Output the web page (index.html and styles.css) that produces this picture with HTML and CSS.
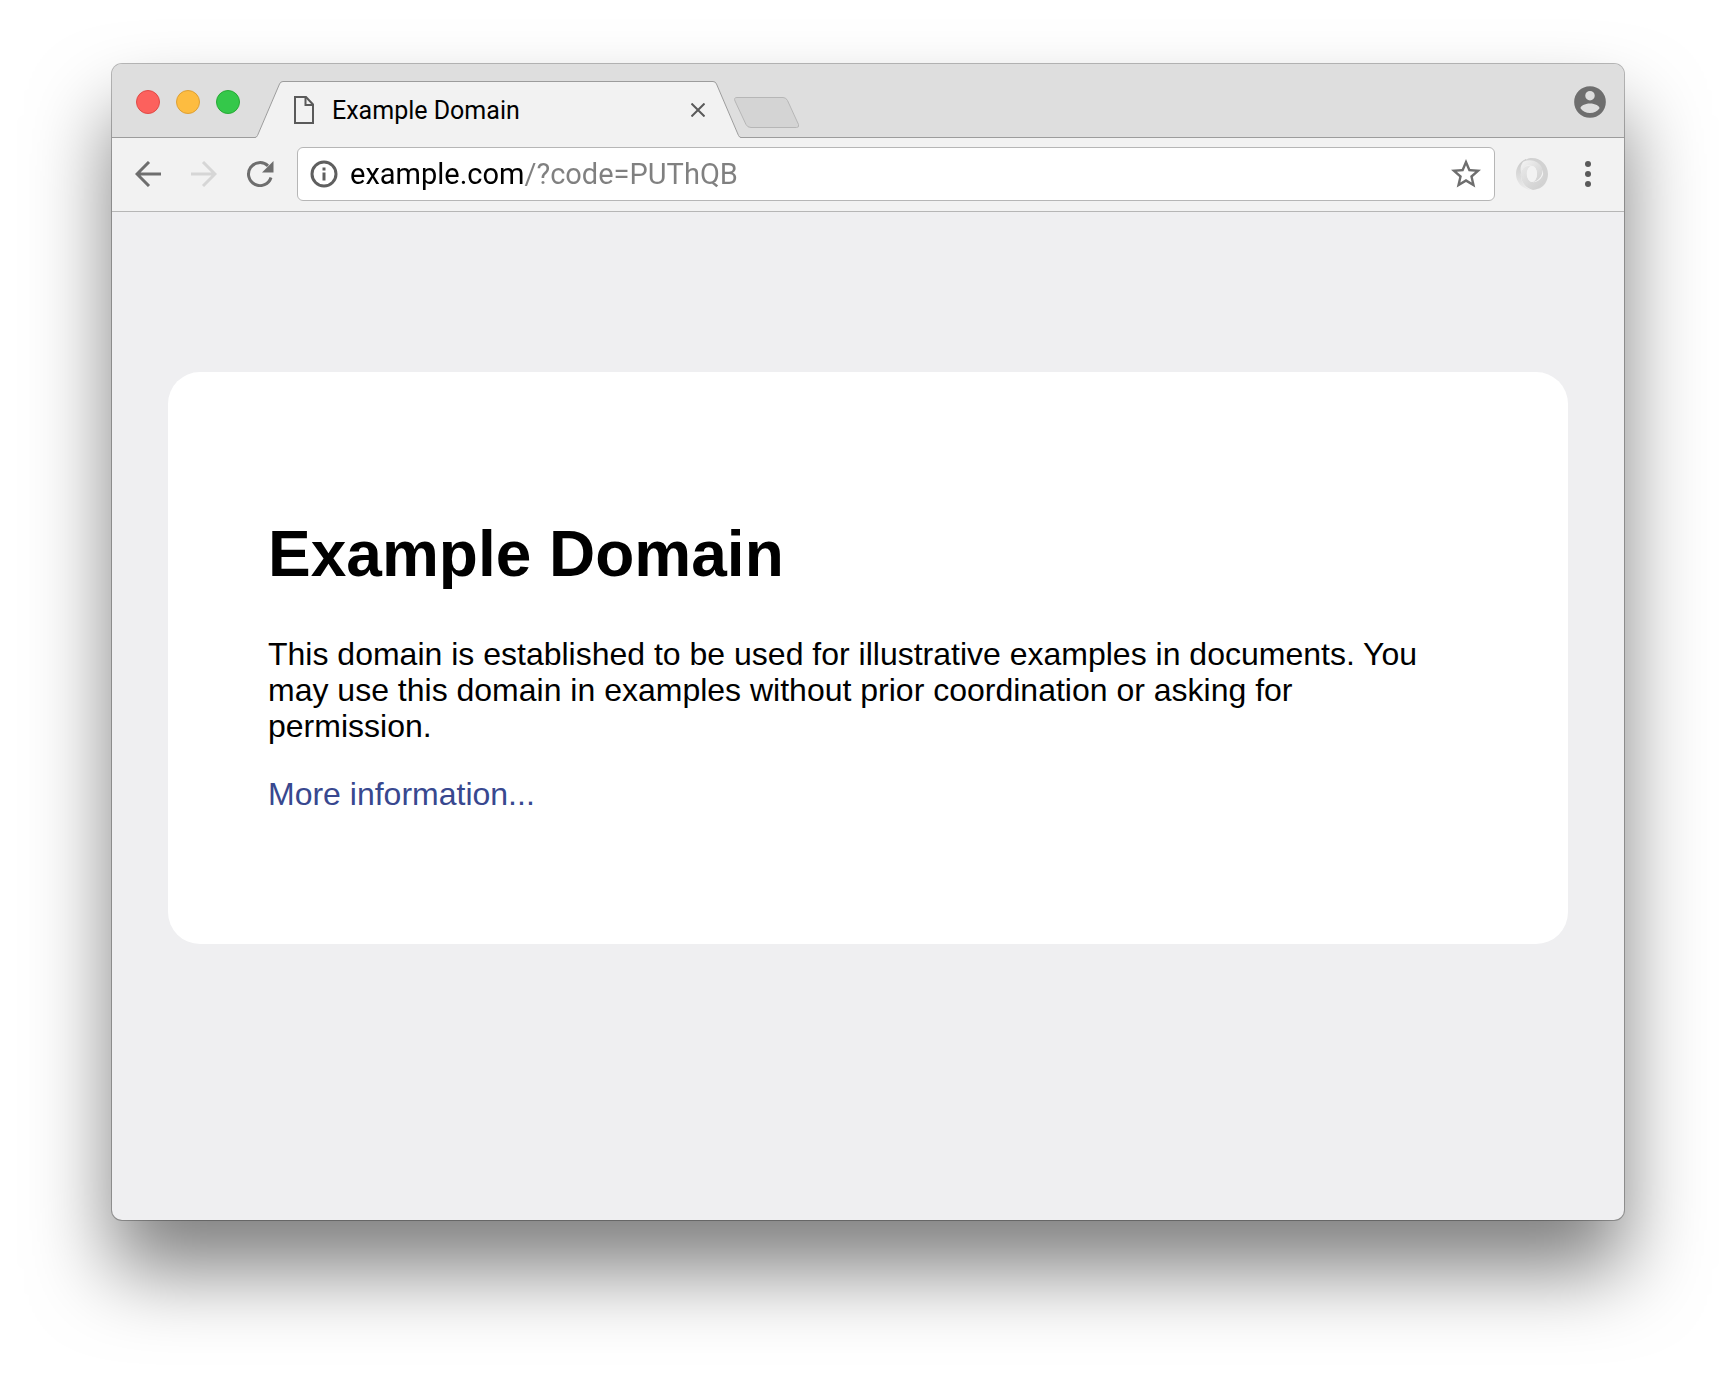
FILE: index.html
```html
<!DOCTYPE html>
<html lang="en">
<head>
  <meta charset="UTF-8">
  <meta name="viewport" content="width=device-width, initial-scale=1.0">
  <title>Example Domain</title>
  <link rel="stylesheet" href="styles.css">
</head>
<body>
<div class="window">
  <header class="tab-strip">
    <div class="lights">
      <button class="light light-close" aria-label="Close window"></button>
      <button class="light light-minimize" aria-label="Minimize window"></button>
      <button class="light light-zoom" aria-label="Zoom window"></button>
    </div>
    <div class="tab">
      <svg class="tab-edge" width="28" height="57" viewBox="0 0 28 57">
        <path class="tab-fill" d="M0 57L2 55L24.5 3Q25.500 .5 28 .5V57Z"/>
        <path class="tab-line" d="M0 56.500Q1.500 56.500 2.500 54.500L24.500 3Q25.500 .5 28 .5"/>
      </svg>
      <div class="tab-body">
        <svg width="20" height="28" viewBox="0 0 20 28" fill="none" stroke="#5a5a5a" stroke-width="2">
          <path d="M1 1H12L19 8.500V27H1Z"/>
          <path d="M11.500 1V9H19"/>
        </svg>
        <span class="tab-title">Example Domain</span>
        <button class="tab-close" aria-label="Close tab">
          <svg width="14" height="14" viewBox="0 0 14 14" fill="none" stroke="#5a5a5a" stroke-width="2">
            <path d="M.5 .5L13.500 13.500M13.500 .5L.5 13.500"/>
          </svg>
        </button>
      </div>
      <svg class="tab-edge" width="28" height="57" viewBox="0 0 28 57">
        <path class="tab-fill" d="M28 57L26 55L3.500 3Q2.500 .5 0 .5V57Z"/>
        <path class="tab-line" d="M28 56.500Q26.500 56.500 25.500 54.500L3.500 3Q2.500 .5 0 .5"/>
      </svg>
    </div>
    <button class="new-tab" aria-label="New tab">
      <svg width="66" height="32" viewBox="0 0 66 32">
        <path d="M3 .5H49Q52 .5 53.500 3.500L64.500 27.500Q65.500 30.500 62.500 30.500H17Q13.500 30.500 12 27.500L1 4Q-.5 .5 3 .5Z" fill="#d4d4d4" stroke="#b6b6b6"/>
      </svg>
    </button>
    <button class="profile" aria-label="Profile">
      <svg width="38" height="38" viewBox="0 0 24 24" fill="#6e6e6e">
        <path fill-rule="evenodd" d="M12 2a10 10 0 1 0 0 20a10 10 0 1 0 0-20zM12 5a3 3 0 1 1 0 6a3 3 0 1 1 0-6zM12 12.900c3.300 0 6 1.500 6 3c-1.200 1.900-3.500 3.100-6 3.100s-4.800-1.200-6-3.100c0-1.500 2.700-3 6-3z"/>
      </svg>
    </button>
  </header>

  <nav class="toolbar">
    <button class="tool" aria-label="Back">
      <svg width="26" height="26" viewBox="0 0 26 26" fill="none" stroke="#6e6e6e" stroke-width="3">
        <path d="M26 13H3M14 1L2 13L14 25"/>
      </svg>
    </button>
    <button class="tool" aria-label="Forward">
      <svg width="26" height="26" viewBox="0 0 26 26" fill="none" stroke="#d6d6d6" stroke-width="3">
        <path d="M0 13H23M12 1L24 13L12 25"/>
      </svg>
    </button>
    <button class="tool" aria-label="Reload">
      <svg width="28" height="26" viewBox="0 0 28 26">
        <path d="M25 16.500A11.500 11.500 0 1 1 22 4.800" fill="none" stroke="#6e6e6e" stroke-width="3"/>
        <path d="M27.500 0V11.500H16Z" fill="#6e6e6e"/>
      </svg>
    </button>
    <div class="address">
      <svg width="28" height="28" viewBox="0 0 28 28" fill="#5f5f5f">
        <circle cx="14" cy="14" r="12" fill="none" stroke="#5f5f5f" stroke-width="3"/>
        <path d="M12.500 7.500h3v3h-3zM12.500 12.500h3v8h-3z"/>
      </svg>
      <input class="url" type="text" aria-label="Address" value="example.com/?code=PUThQB">
      <button class="star" aria-label="Bookmark this page">
        <svg width="36" height="36" viewBox="0 0 24 24" fill="#6e6e6e">
          <path d="M22 9.240l-7.190-.62L12 2 9.190 8.630 2 9.240l5.460 4.730L5.820 21 12 17.270 18.180 21l-1.630-7.030L22 9.240zM12 15.400l-3.760 2.270 1-4.280-3.320-2.880 4.380-.38L12 6.100l1.710 4.040 4.380.38-3.320 2.880 1 4.280L12 15.400z"/>
        </svg>
      </button>
    </div>
    <button class="tool" aria-label="Extension">
      <svg width="32" height="32" viewBox="0 0 32 32">
        <defs>
          <linearGradient id="swirl-outer" x1="0" y1="0" x2="0" y2="1">
            <stop offset="0" stop-color="#c8c8c8"/>
            <stop offset="1" stop-color="#ececec"/>
          </linearGradient>
          <linearGradient id="swirl-top" x1="0" y1="0" x2="1" y2="1">
            <stop offset="0" stop-color="#f4f4f4"/>
            <stop offset="1" stop-color="#cecece"/>
          </linearGradient>
          <linearGradient id="swirl-bottom" x1="0" y1="0" x2="1" y2="1">
            <stop offset="0" stop-color="#e8e8e8"/>
            <stop offset="1" stop-color="#cccccc"/>
          </linearGradient>
        </defs>
        <path d="M10 1C3 4 0 10 0 16C0 24 6 31 15 32C8 29 4 22 5 15C5 11 7 8 11 6Z" fill="url(#swirl-outer)"/>
        <path d="M5 15C4 23 9 30 17 32C26 31 31 23 28 13C27 20 22 25 16 24C12 23 10 18 11 13C12 10 14 8 16 8C10 7 6 10 5 15Z" fill="url(#swirl-bottom)"/>
        <path d="M5 6C9 1 13 0 16 0C25 0 32 7 32 16C32 23 28 29 22 31C27 26 28 20 27 14C25 6 13 1 5 6Z" fill="#d2d2d2"/>
        <path d="M7 4C14 0 23 3 26 10C28 16 23 24 16 24C19 23 21 20 21 16C21 12 19 8 16 8C11 6 7 9 5 14C4 10 5 7 7 4Z" fill="url(#swirl-top)"/>
        <ellipse cx="16" cy="16" rx="5" ry="8" fill="#f2f2f2"/>
      </svg>
    </button>
    <button class="tool" aria-label="Menu">
      <svg width="6" height="26" viewBox="0 0 6 26" fill="#5a5a5a">
        <circle cx="3" cy="3" r="3"/>
        <circle cx="3" cy="13" r="3"/>
        <circle cx="3" cy="23" r="3"/>
      </svg>
    </button>
  </nav>

  <main class="page">
    <div class="card">
      <h1>Example Domain</h1>
      <p>This domain is established to be used for illustrative examples in documents. You may use this domain in examples without prior coordination or asking for permission.</p>
      <p><a href="#">More information...</a></p>
    </div>
  </main>
</div>
</body>
</html>
```
FILE: styles.css
```css
* {
  box-sizing: border-box;
}
body {
  margin: 0;
  min-height: 100vh;
  padding: 64px 112px 160px;
  display: flex;
  background-color: #fff;
  font-family: Roboto, sans-serif;
}
button {
  padding: 0;
  border: 0;
  background: none;
  display: flex;
  align-items: center;
  justify-content: center;
}
svg {
  display: block;
  flex-shrink: 0;
}
.window {
  flex: 1;
  min-width: 0;
  display: flex;
  flex-direction: column;
  border-radius: 10px;
  overflow: hidden;
  background-color: #efeff1;
  box-shadow: 0 0 0 1px rgba(0,0,0,0.27), 0 50px 80px rgba(0,0,0,0.5);
}

/* tabs */
.tab-strip {
  display: flex;
  align-items: flex-end;
  height: 74px;
  background-color: #dedede;
  box-shadow: inset 0 -1px 0 #9c9c9c;
}
.lights {
  display: flex;
  gap: 16px;
  padding: 0 15px 24px 24px;
}
.light {
  width: 24px;
  height: 24px;
  border-radius: 50%;
  border: 1px solid;
}
.light-close {
  background-color: #fc615d;
  border-color: #e04a46;
}
.light-minimize {
  background-color: #fdbc40;
  border-color: #dea034;
}
.light-zoom {
  background-color: #34c84a;
  border-color: #27aa35;
}
.tab {
  display: flex;
  flex: 0 1 486px;
  min-width: 0;
}
.tab-fill {
  fill: #f2f2f2;
}
.tab-line {
  fill: none;
  stroke: #9c9c9c;
}
.tab-body {
  flex: 1;
  min-width: 0;
  display: flex;
  align-items: center;
  padding: 0 8px 0 11px;
  background-color: #f2f2f2;
  border-top: 1px solid #9c9c9c;
}
.tab-title {
  flex: 1;
  margin-left: 18px;
  font-size: 25px;
  white-space: nowrap;
  overflow: hidden;
}
.new-tab {
  margin: 0 auto 9px -7px;
}
.profile {
  margin: 0 15px 17px 0;
}

/* toolbar */
.toolbar {
  display: flex;
  align-items: center;
  height: 74px;
  padding: 0 8px 1px;
  background-color: #f2f2f2;
  border-bottom: 1px solid #b6b6b6;
}
.tool {
  width: 56px;
  height: 56px;
}
.address {
  flex: 1;
  min-width: 0;
  display: flex;
  align-items: center;
  height: 54px;
  margin: 0 9px;
  padding: 0 10px 0 12px;
  background-color: #fff;
  border: 1px solid #b6b6b6;
  border-radius: 6px;
}
.url {
  flex: 1;
  min-width: 0;
  height: 40px;
  margin-left: 12px;
  padding: 0;
  border: 0;
  outline: 0;
  font-family: inherit;
  font-size: 29px;
  /* host in black, the rest of the address in grey */
  background: linear-gradient(90deg, #000 174px, #808080 174px);
  -webkit-background-clip: text;
  background-clip: text;
  color: transparent;
}

/* page */
.page {
  flex: 1;
  padding: 160px 56px;
  font-family: "Liberation Sans", Arial, sans-serif;
}
.card {
  padding: 100px 120px 100px 100px;
  background-color: #fff;
  border-radius: 32px;
}
h1 {
  margin: 43px 0;
  font-size: 64px;
  line-height: 78px;
}
p {
  margin: 32px 0;
  font-size: 32px;
  line-height: 36px;
}
a {
  color: #38488f;
  text-decoration: none;
}
```
